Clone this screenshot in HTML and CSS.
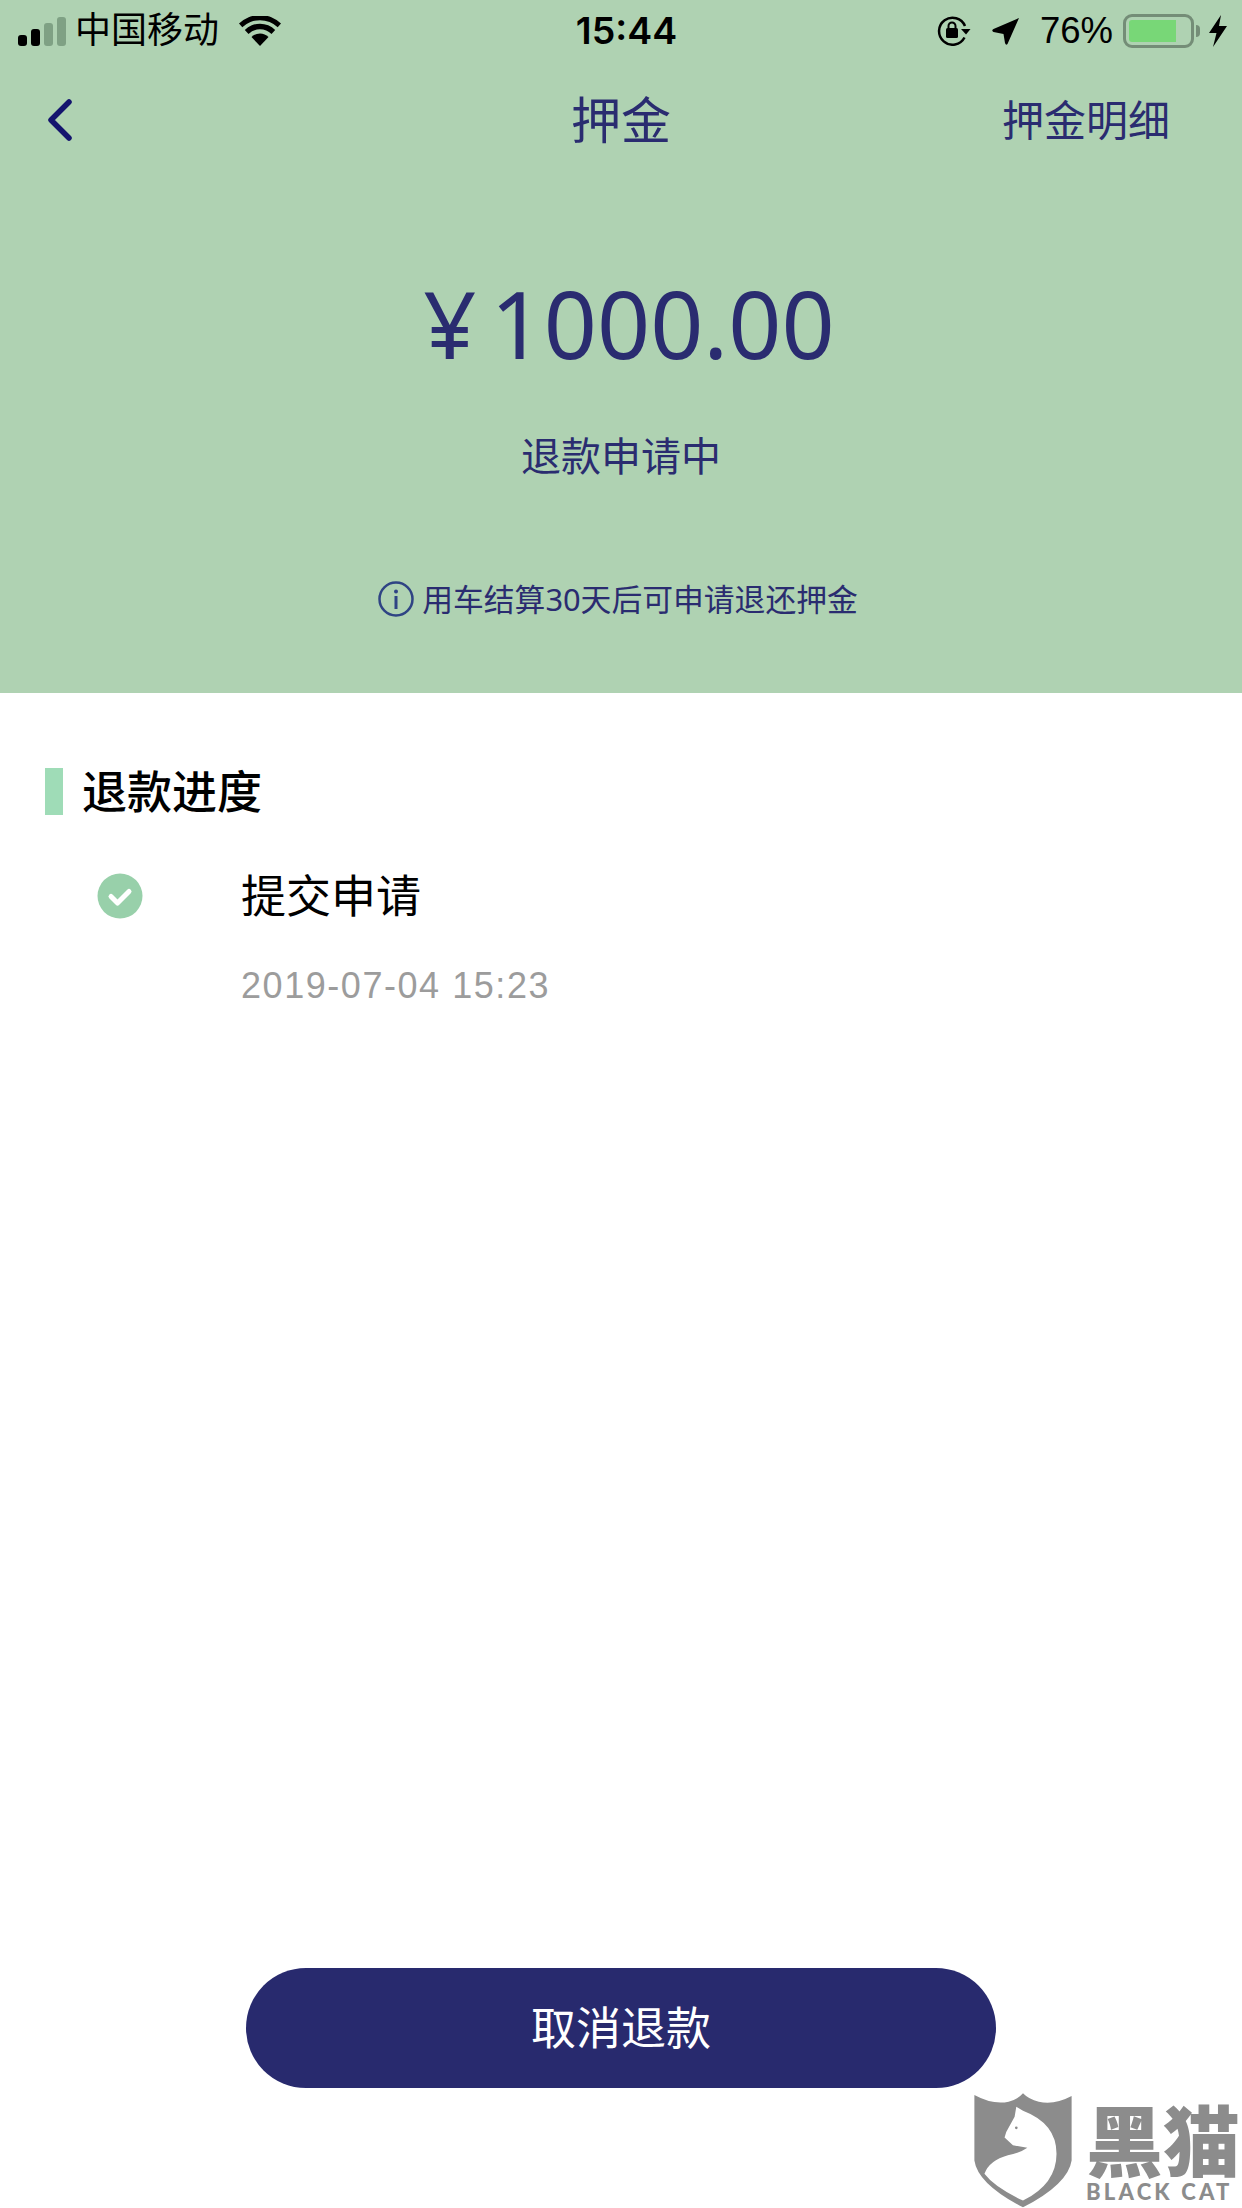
FILE: index.html
```html
<!DOCTYPE HTML>
<html>
<head>
<meta charset="utf-8">
<title>押金</title>
<link rel="stylesheet" href="styles.css">
</head>
<body>
	<div class="page">
		<div class="top">
			<div class="status">
				<div class="status-left">
					<span class="signal"><i class="on s1"></i><i class="on s2"></i><i class="s3"></i><i class="s4"></i></span>
					<span class="carrier">中国移动</span>
					<svg class="wifi" width="42" height="30" viewBox="0 0 42 30">
						<path d="M21 30 L12.5 21 A12 12 0 0 1 29.500 21 Z"/>
						<path d="M9.500 18 L5.800 14 A21.500 21.500 0 0 1 36.200 14 L32.500 18 A16.500 16.500 0 0 0 9.500 18 Z"/>
						<path d="M3.300 11.300 L0 7.600 A30 30 0 0 1 42 7.600 L38.700 11.300 A25.500 25.500 0 0 0 3.300 11.300 Z"/>
					</svg>
				</div>
				<div class="time">15:44</div>
				<div class="status-right">
					<svg class="lock" width="34" height="30" viewBox="0 0 34 30">
						<path d="M27.500 21.500 A13.500 13.500 0 1 1 28 10" fill="none" stroke="#000" stroke-width="2.500"/>
						<path d="M24 13 L33.500 13 L29 18.500 Z"/>
						<rect x="9" y="12" width="12" height="10" rx="1.500"/>
						<path d="M11.500 12 V10 A3.500 3.500 0 0 1 18.500 10 V12" fill="none" stroke="#000" stroke-width="2"/>
					</svg>
					<svg class="arrow" width="27" height="27" viewBox="0 0 27 27">
						<path d="M27 0 L15.500 26 Q14 28 13 25 L11.500 16 L1.500 14 Q-1 12.500 1.500 11 Z"/>
					</svg>
					<span class="pct">76%</span>
					<span class="battery"><span class="battery-fill"></span></span>
					<span class="nub"></span>
					<svg class="bolt" width="18" height="32" viewBox="0 0 18 32">
						<path d="M12 0 L0 18 L7.500 18 L4 32 L18 11 L10 11 Z"/>
					</svg>
				</div>
			</div>

			<div class="nav">
				<div class="nav-left">
					<svg width="24" height="42" viewBox="0 0 24 42">
						<path d="M21 3 L3 21 L21 39" fill="none" stroke="#14146e" stroke-width="5.500" stroke-linecap="round" stroke-linejoin="round"/>
					</svg>
				</div>
				<div class="nav-title">押金</div>
				<div class="nav-right">押金明细</div>
			</div>

			<div class="amount"><span class="yen">¥</span>1000.00</div>
			<div class="state">退款申请中</div>
			<div class="hint">
				<svg width="36" height="36" viewBox="0 0 36 36">
					<circle cx="18" cy="18" r="16.500" fill="none" stroke="#2f4484" stroke-width="2.500"/>
					<circle cx="18" cy="10.500" r="2" fill="#2f4484"/>
					<rect x="16.500" y="15" width="3" height="13" fill="#2f4484"/>
				</svg>
				<span>用车结算30天后可申请退还押金</span>
			</div>
		</div>

		<div class="content">
			<div class="section-title">退款进度</div>
			<div class="step">
				<div class="step-icon">
					<svg width="46" height="46" viewBox="0 0 46 46">
						<circle cx="23" cy="23" r="22.500" fill="#98d0aa"/>
						<path d="M14 23.500 L20.500 30 L32 18.500" fill="none" stroke="#fff" stroke-width="5" stroke-linecap="round" stroke-linejoin="round"/>
					</svg>
				</div>
				<div class="step-body">
					<div class="step-name">提交申请</div>
					<div class="step-date">2019-07-04 15:23</div>
				</div>
			</div>
		</div>

		<div class="footer">
			<a class="btn">取消退款</a>
		</div>

		<div class="watermark">
			<svg width="100" height="116" viewBox="68 96 294 346">
				<path d="M70 105 Q125 135 172 125 Q200 118 215 100 Q232 118 262 125 Q310 135 360 108 V300 Q350 370 215 440 Q80 370 70 300 Z" fill="#8c8c8c"/>
				<path d="M195 140 L215 152 Q315 190 315 280 Q315 370 215 420 Q130 380 100 340 Q115 300 170 285 Q205 278 228 262 L185 255 L160 232 L165 215 L190 170 Z" fill="#fff"/>
				<circle cx="195" cy="203" r="4" fill="#8c8c8c"/>
			</svg>
			<div class="wm-text">
				<div class="wm-cn">黑猫</div>
				<div class="wm-en">BLACK CAT</div>
			</div>
		</div>
	</div>
</body>
</html>
```

FILE: styles.css
```css
* {
	box-sizing: border-box;
}

html, body {
	margin: 0;
	padding: 0;
	background: #fff;
}

body {
	font-family: "Noto Sans", "Noto Sans CJK SC", sans-serif;
}

.page {
	position: relative;
	width: 1242px;
	height: 2208px;
	display: flex;
	flex-direction: column;
	overflow: hidden;
}

.top {
	height: 693px;
	background: #afd2b2;
	color: #2a2c70;
	flex-shrink: 0;
}

/* status bar */
.status {
	height: 62px;
	display: grid;
	grid-template-columns: 1fr auto 1fr;
	align-items: center;
	padding: 0 15px 0 18px;
	color: #000;
}

.status-left, .status-right {
	display: flex;
	align-items: center;
}

.status-right {
	justify-content: flex-end;
}

.signal {
	display: flex;
	align-items: flex-end;
	gap: 4px;
	height: 29px;
	margin-top: 1px;
}

.signal i {
	display: block;
	width: 9px;
	border-radius: 3px;
	background: #7fa184;
}

.signal i.on {
	background: #000;
}

.s1 { height: 11px; }
.s2 { height: 17px; }
.s3 { height: 23px; }
.s4 { height: 29px; }

.carrier {
	margin-left: 9px;
	font: 36px/1 "Liberation Sans", "Noto Sans CJK SC", sans-serif;
}

.wifi {
	margin-left: 20px;
}

.time {
	font: 600 37.500px/1 "Inter", "Liberation Sans", sans-serif;
	margin-left: 8px;
}

.lock {
	margin-right: 21px;
}

.arrow {
	margin-right: 21px;
}

.pct {
	font: 36.500px/1 "Liberation Sans", sans-serif;
	margin-right: 10px;
}

.battery {
	display: block;
	width: 71px;
	height: 34px;
	border: 3px solid #748d77;
	border-radius: 9px;
	padding: 3px;
}

.battery-fill {
	display: block;
	width: 47px;
	height: 100%;
	background: #78d777;
	border-radius: 3px 0 0 3px;
}

.nub {
	width: 4px;
	height: 12px;
	margin-left: 2px;
	background: #748d77;
	border-radius: 0 4px 4px 0;
}

.bolt {
	margin-left: 9px;
}

/* nav */
.nav {
	height: 116px;
	display: grid;
	grid-template-columns: 1fr auto 1fr;
	align-items: center;
	padding: 0 72px;
}

.nav-left {
	display: flex;
	margin-left: -24px;
}

.nav-title {
	font-size: 50px;
	line-height: 1;
}

.nav-right {
	text-align: right;
	font-size: 42px;
	line-height: 1;
}

/* amount block */
.amount {
	margin-top: 95px;
	padding-left: 16px;
	text-align: center;
	font-size: 93px;
	line-height: 100px;
	height: 100px;
}

.yen {
	margin-right: 14px;
}

.state {
	margin-top: 58px;
	text-align: center;
	font-size: 40px;
	line-height: 50px;
}

.hint {
	margin-top: 98px;
	padding-right: 6px;
	display: flex;
	justify-content: center;
	align-items: center;
	gap: 8px;
	font-size: 30.800px;
	line-height: 40px;
}

/* progress */
.content {
	padding: 75px 0 0 45px;
}

.section-title {
	border-left: 18px solid #9fdcb7;
	height: 47px;
	padding-left: 19px;
	font-size: 45px;
	line-height: 47px;
	font-weight: 500;
	color: #000;
}

.step {
	display: flex;
	margin-top: 53px;
	padding-left: 52px;
}

.step-icon {
	width: 144px;
	padding-top: 5px;
}

.step-name {
	font-size: 45px;
	line-height: 56px;
	color: #000;
}

.step-date {
	margin-top: 37px;
	font: 36px/50px "Liberation Sans", sans-serif;
	letter-spacing: 1.550px;
	color: #9c9c9c;
}

/* bottom button */
.footer {
	margin-top: auto;
	padding-bottom: 120px;
	display: flex;
	justify-content: center;
}

.btn {
	display: block;
	width: 750px;
	height: 120px;
	border-radius: 60px;
	background: #282a6e;
	color: #fff;
	text-align: center;
	font-size: 45px;
	line-height: 120px;
}

/* logo over the corner */
.watermark {
	position: absolute;
	left: 973px;
	top: 2092px;
	display: flex;
	gap: 13px;
	color: #8c8c8c;
}

.wm-text {
	display: flex;
	flex-direction: column;
	width: 156px;
}

.wm-cn {
	font: 900 77px/68px "Noto Sans CJK SC", sans-serif;
	margin-top: 12px;
	white-space: nowrap;
}

.wm-en {
	font: 900 22px/24px "Lato", "Liberation Sans", sans-serif;
	letter-spacing: 3.200px;
	margin-top: 8px;
	white-space: nowrap;
}
```
